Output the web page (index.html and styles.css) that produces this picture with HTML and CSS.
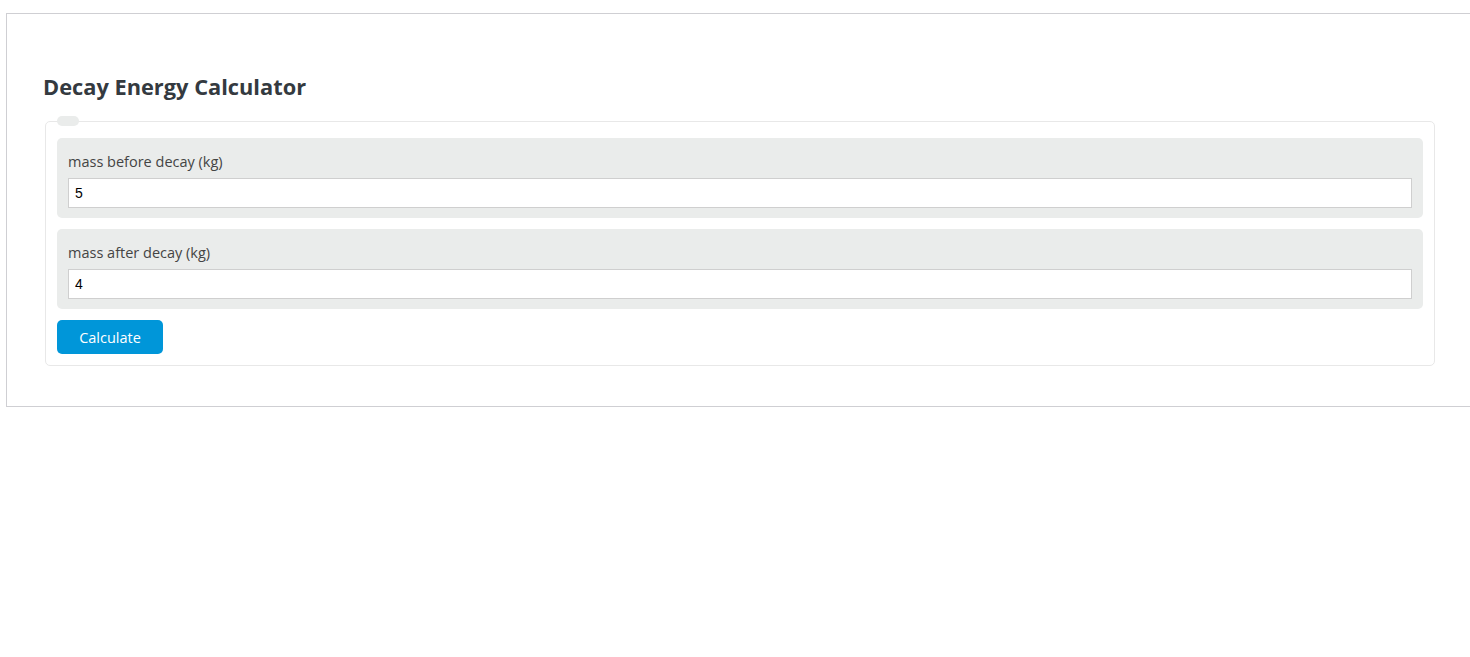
FILE: index.html
```html
<!DOCTYPE html>
<html lang="en">
<head>
<meta charset="utf-8">
<title>Decay Energy Calculator</title>
<link rel="stylesheet" href="styles.css">
</head>
<body>
<div class="box">
  <h2 class="title">Decay Energy Calculator</h2>
  <div class="calc">
    <span class="legend"></span>
    <div class="group">
      <label class="label" for="m1">mass before decay (kg)</label>
      <input class="input" id="m1" type="text" value="5">
    </div>
    <div class="group">
      <label class="label" for="m2">mass after decay (kg)</label>
      <input class="input" id="m2" type="text" value="4">
    </div>
    <button class="btn" type="button">Calculate</button>
  </div>
</div>
</body>
</html>
```
FILE: styles.css
```css
html, body {
  margin: 0;
  padding: 0;
  overflow: hidden;
  background: #fff;
}
body {
  font-family: "Open Sans", "Noto Sans", sans-serif;
}
.box {
  box-sizing: border-box;
  width: 1467px;
  margin: 13px 0 0 6px;
  border: 1px solid #cfcfd3;
  padding: 58px 37px 40px 36px;
}
.title {
  margin: 0 0 19px 0;
  font-size: 21.8px;
  line-height: 30px;
  font-weight: 700;
  color: #343a40;
}
.calc {
  position: relative;
  margin-left: 2px;
  border: 1px solid #e8e8e8;
  border-radius: 5px;
  padding: 16px 11px 11px;
  display: flex;
  flex-direction: column;
  gap: 11px;
}
.legend {
  position: absolute;
  top: -6px;
  left: 11px;
  width: 22px;
  height: 10px;
  border-radius: 5px;
  background: #eaeceb;
}
.group {
  background: #eaeceb;
  border-radius: 5px;
  padding: 13px 11px 10px;
  display: flex;
  flex-direction: column;
}
.label {
  font-size: 14.5px;
  line-height: 21px;
  color: #444;
  margin-bottom: 6px;
}
.input {
  box-sizing: border-box;
  height: 30px;
  border: 1px solid #cfcfcf;
  background: #fff;
  padding: 0 6px;
  font-family: "Liberation Sans", Arial, sans-serif;
  font-size: 14px;
  color: #000;
  outline: none;
}
.btn {
  align-self: flex-start;
  width: 106px;
  height: 34px;
  border: none;
  border-radius: 5px;
  background: #0096d9;
  color: #fff;
  font-family: "Open Sans", "Noto Sans", sans-serif;
  font-size: 14.5px;
  padding: 0;
}
```
